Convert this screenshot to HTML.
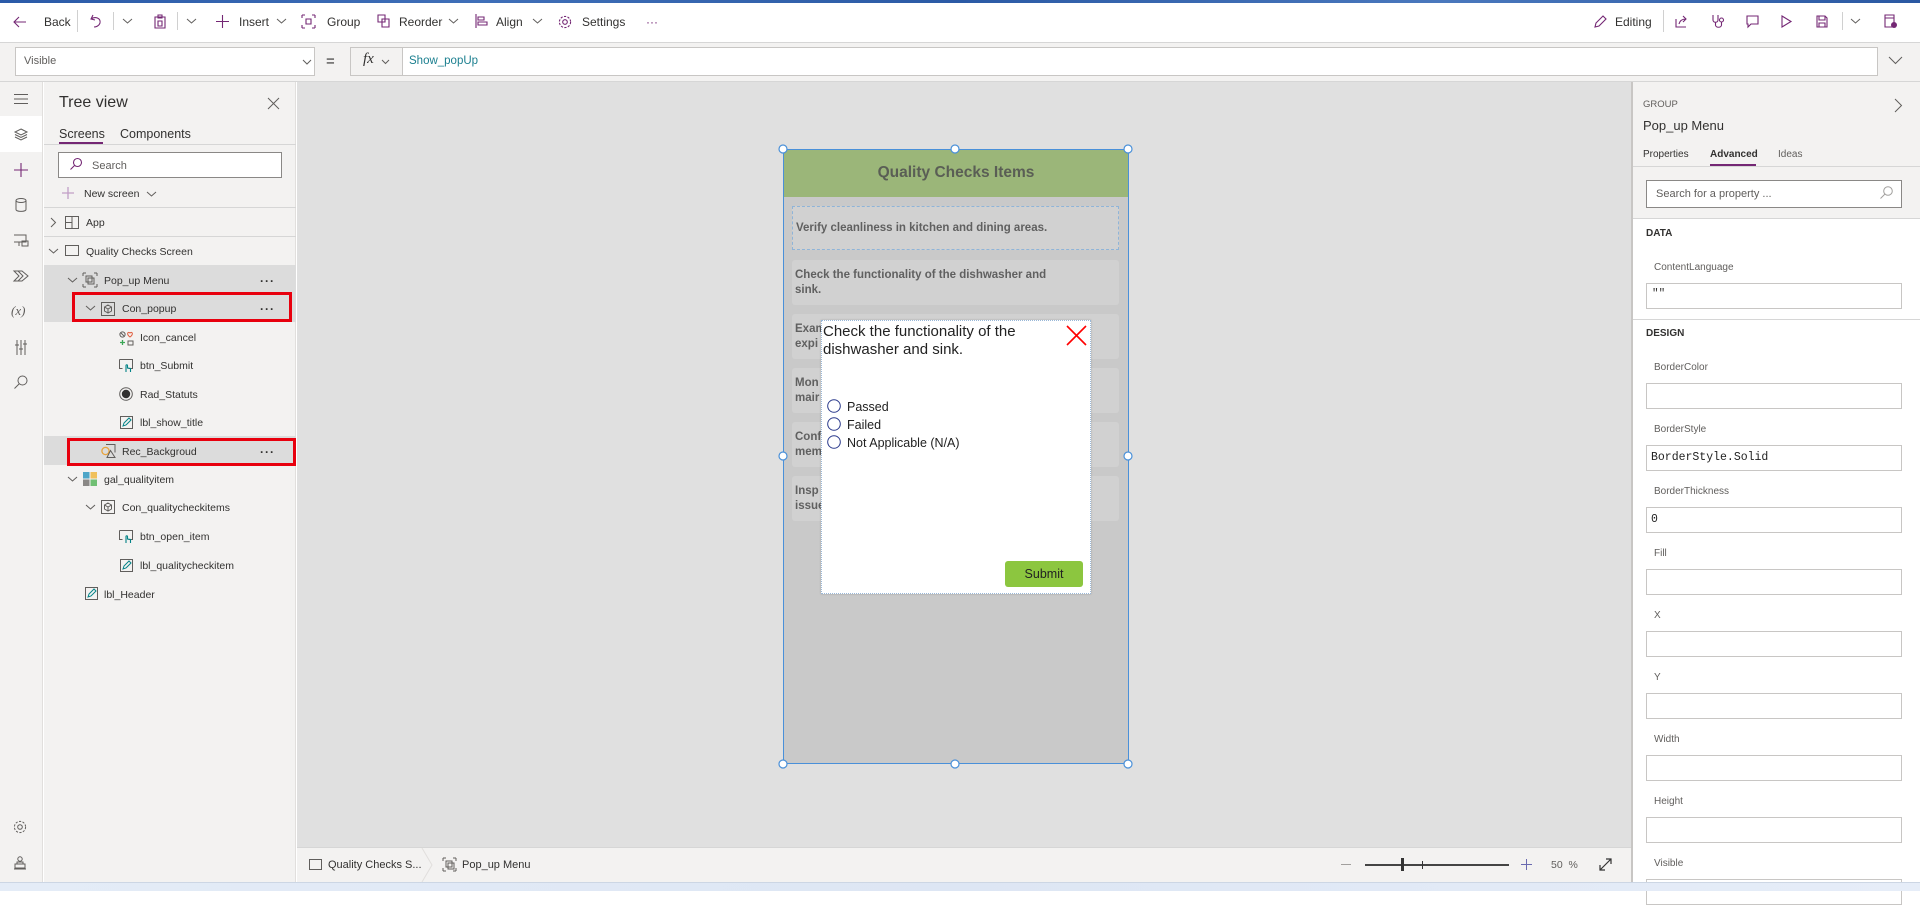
<!DOCTYPE html>
<html><head><meta charset="utf-8">
<style>
*{box-sizing:border-box;margin:0;padding:0}
body{width:1920px;height:891px;overflow:hidden;background:#fff;font-family:"Liberation Sans",sans-serif;color:#323130;position:relative;font-size:12px}
.a{position:absolute}
.t{position:absolute;white-space:nowrap}
svg{position:absolute;overflow:visible}
.pu{stroke:#742774;fill:none;stroke-width:1.1}
.gr{stroke:#605e5c;fill:none;stroke-width:1}
.tr{font-size:10.5px;color:#323130}
.dots{position:absolute;left:260px;color:#323130;letter-spacing:1px;font-size:12px;font-weight:bold}
.lbl{position:absolute;left:1654px;font-size:10px;color:#605e5c}
.inp{position:absolute;left:1646px;width:256px;height:26px;border:1px solid #c8c6c4;background:#fff}
.item{position:absolute;left:792px;width:327px;height:45px;background:#d1d1d1;border-radius:3px;color:#606060;font-size:11.5px;font-weight:bold;padding:8px 3px;line-height:15px}
</style></head><body>
<div class="a" style="left:0;top:0;width:1920px;height:3px;background:linear-gradient(90deg,#2a5aa8,#3f6fb8,#2b5aa5,#4a78bd,#2a58a2)"></div>
<div class="a" style="left:0;top:42px;width:1920px;height:1px;background:#d6d6d6"></div>
<svg style="left:13px;top:16px" width="14" height="12"><path class="pu" d="M13 6H1M6 1L1 6l5 5"/></svg>
<div class="t" style="left:44px;top:15px;font-size:12px">Back</div>
<div class="a" style="left:77px;top:10px;width:1px;height:22px;background:#d0d0d0"></div>
<svg style="left:90px;top:14px" width="12" height="14"><path class="pu" d="M3 1L1 5l4 1M1 5c4-3 10-1 9 4-1 3-4 4-6 4"/></svg>
<div class="a" style="left:113px;top:12px;width:1px;height:18px;background:#d0d0d0"></div>
<svg style="left:123px;top:19px" width="9" height="5"><path class="gr" d="M0 0l4.5 4L9 0"/></svg>
<svg style="left:154px;top:14px" width="12" height="15"><path class="pu" d="M1 3h10v11H1zM4 1h4v3H4zM4 7h4v5H4z"/></svg>
<div class="a" style="left:177px;top:12px;width:1px;height:18px;background:#d0d0d0"></div>
<svg style="left:187px;top:19px" width="9" height="5"><path class="gr" d="M0 0l4.5 4L9 0"/></svg>
<svg style="left:216px;top:15px" width="13" height="13"><path class="pu" d="M6.5 0v13M0 6.5h13"/></svg>
<div class="t" style="left:239px;top:15px">Insert</div>
<svg style="left:277px;top:19px" width="9" height="5"><path class="gr" d="M0 0l4.5 4L9 0"/></svg>
<svg style="left:302px;top:15px" width="13" height="13"><path class="pu" d="M0 0h3M10 0h3M0 13h3M10 13h3M0 0v3M13 0v3M0 10v3M13 10v3M4 4h5v5H4z"/></svg>
<div class="t" style="left:327px;top:15px">Group</div>
<svg style="left:377px;top:14px" width="13" height="14"><path class="pu" d="M1 1h7v7H1zM5 5h7v8H5z"/></svg>
<div class="t" style="left:399px;top:15px">Reorder</div>
<svg style="left:449px;top:19px" width="9" height="5"><path class="gr" d="M0 0l4.5 4L9 0"/></svg>
<svg style="left:475px;top:14px" width="13" height="14"><path class="pu" d="M1 0v14M3 3h6v3H3zM3 8h9v3H3z"/></svg>
<div class="t" style="left:496px;top:15px">Align</div>
<svg style="left:533px;top:19px" width="9" height="5"><path class="gr" d="M0 0l4.5 4L9 0"/></svg>
<svg style="left:558px;top:15px" width="14" height="14"><circle class="pu" cx="7" cy="7" r="2.3"/><circle class="pu" cx="7" cy="7" r="5.6" stroke-dasharray="2.2 1.4"/></svg>
<div class="t" style="left:582px;top:15px">Settings</div>
<div class="t" style="left:646px;top:15px;color:#742774">···</div>
<svg style="left:1594px;top:15px" width="12" height="13"><path class="pu" d="M1 12l1-4 7-7 3 3-7 7z"/></svg>
<div class="t" style="left:1615px;top:15px">Editing</div>
<div class="a" style="left:1663px;top:10px;width:1px;height:22px;background:#d0d0d0"></div>
<svg style="left:1675px;top:15px" width="13" height="13"><path class="pu" d="M1 4v8h10M4 9c1-4 4-5 7-5M8 1l3 3-3 3"/></svg>
<svg style="left:1712px;top:14px" width="13" height="15"><path class="pu" d="M1 1v5c0 3 5 3 5 0V1M3.5 8v3c0 3 6 3 6 0V8"/><circle class="pu" cx="9.5" cy="6" r="2"/></svg>
<svg style="left:1746px;top:15px" width="13" height="13"><path class="pu" d="M1 1h11v8H5l-3 3V9H1z"/></svg>
<svg style="left:1781px;top:15px" width="11" height="13"><path class="pu" d="M1 1l9 5.5L1 12z"/></svg>
<svg style="left:1816px;top:15px" width="12" height="13"><path class="pu" d="M1 1h8l2 2v9H1zM3 1v4h6V1M3 8h6v4H3z"/></svg>
<div class="a" style="left:1842px;top:12px;width:1px;height:18px;background:#d0d0d0"></div>
<svg style="left:1851px;top:19px" width="9" height="5"><path class="gr" d="M0 0l4.5 4L9 0"/></svg>
<svg style="left:1884px;top:14px" width="13" height="15"><path class="pu" d="M1 1h9v12H1zM1 4h9"/><circle cx="10" cy="11" r="3" fill="#742774"/></svg>
<div class="a" style="left:0;top:43px;width:1920px;height:39px;background:#f3f2f1"></div>
<div class="a" style="left:15px;top:47px;width:300px;height:29px;background:#fff;border:1px solid #c8c6c4"></div>
<div class="t" style="left:24px;top:55px;font-size:11px;color:#605e5c">Visible</div>
<svg style="left:303px;top:60px" width="8" height="4"><path class="gr" d="M0 0l4 4 4-4"/></svg>
<div class="t" style="left:326px;top:53px;font-size:15px;color:#323130">=</div>
<div class="a" style="left:350px;top:47px;width:1528px;height:29px;background:#fff;border:1px solid #c8c6c4"></div>
<div class="a" style="left:351px;top:48px;width:52px;height:27px;background:#f3f2f1;border-right:1px solid #c8c6c4"></div>
<div class="t" style="left:363px;top:51px;font-family:'Liberation Serif',serif;font-style:italic;font-size:15px">fx</div>
<svg style="left:382px;top:60px" width="7" height="4"><path class="gr" d="M0 0l3.5 3.5L7 0"/></svg>
<div class="t" style="left:409px;top:55px;font-size:11.5px;color:#1b7f8f">Show_popUp</div>
<svg style="left:1889px;top:57px" width="13" height="7"><path class="gr" d="M0 0l6.5 6.5L13 0"/></svg>
<div class="a" style="left:0;top:81px;width:1920px;height:1px;background:#d6d6d6"></div>
<div class="a" style="left:0;top:82px;width:43px;height:800px;background:#f3f2f1;border-right:1px solid #e1dfdd"></div>
<div class="a" style="left:0;top:116px;width:42px;height:36px;background:#fff"></div>
<svg style="left:14px;top:94px" width="14" height="10"><path class="gr" d="M0 .5h14M0 5h14M0 9.5h14"/></svg>
<svg style="left:14px;top:128px" width="14" height="12"><path class="gr" d="M7 1l6 3-6 3-6-3zM1 6.5l6 3 6-3M1 9l6 3 6-3"/></svg>
<svg style="left:14px;top:163px" width="14" height="14"><path class="pu" d="M7 0v14M0 7h14"/></svg>
<svg style="left:15px;top:198px" width="12" height="14"><ellipse class="gr" cx="6" cy="2.5" rx="5" ry="2"/><path class="gr" d="M1 2.5v9c0 2.5 10 2.5 10 0v-9"/></svg>
<svg style="left:13px;top:234px" width="16" height="13"><path class="gr" d="M1 1h12v7H1M6 8v4M9 7h6v5H9z"/></svg>
<svg style="left:13px;top:270px" width="16" height="12"><path class="gr" d="M1 1h8l6 5-6 5H1l5-5zM5 1l5 5-5 5"/></svg>
<div class="t" style="left:11px;top:303px;font-family:'Liberation Serif',serif;font-size:13px;font-style:italic;color:#605e5c">(x)</div>
<svg style="left:15px;top:340px" width="12" height="15"><path class="gr" d="M2 0v15M6 0v15M10 0v15M0 5h4M4 9h4M8 4h4"/></svg>
<svg style="left:14px;top:375px" width="14" height="14"><circle class="gr" cx="8.5" cy="5.5" r="4.5"/><path class="gr" d="M5.5 8.5L.5 13.5"/></svg>
<svg style="left:13px;top:820px" width="14" height="14"><circle class="gr" cx="7" cy="7" r="2.3"/><circle class="gr" cx="7" cy="7" r="5.6" stroke-dasharray="2.2 1.4"/></svg>
<svg style="left:13px;top:856px" width="14" height="14"><circle class="gr" cx="7" cy="3" r="2.2"/><path class="gr" d="M2 8h10v4H2zM1 13h12M4 8v-2h6v2"/></svg>
<div class="a" style="left:44px;top:82px;width:252px;height:800px;background:#f3f2f1;border-right:1px solid #e1dfdd"></div>
<div class="t" style="left:59px;top:94px;font-size:16px;color:#323130">Tree view</div>
<svg style="left:268px;top:98px" width="11" height="11"><path class="gr" d="M0 0l11 11M11 0L0 11"/></svg>
<div class="t" style="left:59px;top:127px;font-size:12.5px">Screens</div>
<div class="a" style="left:59px;top:142px;width:44px;height:2px;background:#742774"></div>
<div class="t" style="left:120px;top:127px;font-size:12.5px">Components</div>
<div class="a" style="left:44px;top:144px;width:252px;height:1px;background:#d6d6d6"></div>
<div class="a" style="left:58px;top:152px;width:224px;height:26px;background:#fff;border:1px solid #8a8886"></div>
<svg style="left:70px;top:158px" width="12" height="12"><circle class="pu" cx="7.5" cy="4.5" r="4"/><path class="pu" d="M4.5 7.5L.5 11.5"/></svg>
<div class="t" style="left:92px;top:160px;font-size:11px;color:#605e5c">Search</div>
<svg style="left:62px;top:187px" width="12" height="12"><path d="M6 0v12M0 6h12" stroke="#c19ec7" stroke-width="1.3"/></svg>
<div class="t tr" style="left:84px;top:188px">New screen</div>
<svg style="left:147px;top:192px" width="9" height="5"><path class="gr" d="M0 0l4.5 4L9 0"/></svg>
<div class="a" style="left:44px;top:207px;width:252px;height:1px;background:#d6d6d6"></div>
<svg style="left:51px;top:218px" width="5" height="9"><path class="gr" d="M0 0l4.5 4.5L0 9"/></svg>
<svg style="left:65px;top:216px" width="14" height="13"><path class="gr" d="M.5.5h13v12H.5zM7 .5v12M.5 6.5h6.5"/></svg>
<div class="t tr" style="left:86px;top:217px">App</div>
<div class="a" style="left:44px;top:236px;width:252px;height:1px;background:#d6d6d6"></div>
<svg style="left:49px;top:249px" width="9" height="5"><path class="gr" d="M0 0l4.5 4L9 0"/></svg>
<svg style="left:65px;top:245px" width="14" height="11"><path class="gr" d="M.5.5h13v10H.5z"/></svg>
<div class="t tr" style="left:86px;top:246px">Quality Checks Screen</div>
<div class="a" style="left:44px;top:265px;width:252px;height:57px;background:#dcdcdc"></div>
<div class="a" style="left:44px;top:436px;width:252px;height:29px;background:#dcdcdc"></div>
<svg style="left:68px;top:278px" width="9" height="5"><path class="gr" d="M0 0l4.5 4L9 0"/></svg>
<svg style="left:83px;top:273px" width="14" height="14"><path class="gr" d="M0 0h3M11 0h3M0 14h3M11 14h3M0 0v3M14 0v3M0 11v3M14 11v3M3 3h6v6H3zM5 5h6v6H5z"/></svg>
<div class="t tr" style="left:104px;top:275px">Pop_up Menu</div>
<div class="dots" style="top:274px">···</div>
<div class="a" style="left:72px;top:292px;width:220px;height:30px;border:3px solid #e8000e"></div>
<svg style="left:86px;top:306px" width="9" height="5"><path class="gr" d="M0 0l4.5 4L9 0"/></svg>
<svg style="left:101px;top:302px" width="14" height="14"><path class="gr" d="M.5.5h13v13H.5zM7 3l3.5 2v4L7 11 3.5 9V5zM3.5 5L7 7l3.5-2M7 7v4"/></svg>
<div class="t tr" style="left:122px;top:303px">Con_popup</div>
<div class="dots" style="top:302px">···</div>
<svg style="left:119px;top:331px" width="15" height="15"><circle cx="3.5" cy="3.5" r="2.6" fill="none" stroke="#605e5c"/><path d="M2 2l3 3" stroke="#605e5c"/><path d="M11 2c-2-2-4 1 0 4 4-3 2-6 0-4z" fill="none" stroke="#e05a3a"/><path d="M3.5 9v5M1 11.5h5" stroke="#3aa655" stroke-width="1.3"/><path d="M9 10h5v4H9z" fill="none" stroke="#605e5c"/></svg>
<div class="t tr" style="left:140px;top:332px">Icon_cancel</div>
<svg style="left:119px;top:359px" width="15" height="14"><path class="gr" d="M.5.5h13v9h-4M.5.5v9h3"/><path d="M7 13V6.5c0-1 1.5-1 1.5 0V9l3 .5V13" fill="none" stroke="#038387" stroke-width="1.1"/></svg>
<div class="t tr" style="left:140px;top:360px">btn_Submit</div>
<svg style="left:119px;top:387px" width="14" height="14"><circle cx="7" cy="7" r="6.3" fill="none" stroke="#605e5c"/><circle cx="7" cy="7" r="4.2" fill="#323130"/></svg>
<div class="t tr" style="left:140px;top:389px">Rad_Statuts</div>
<svg style="left:120px;top:416px" width="13" height="13"><path class="gr" d="M.5.5h12v12H.5z"/><path d="M3 10l1-3 5-5 2 2-5 5z" fill="none" stroke="#038387"/></svg>
<div class="t tr" style="left:140px;top:417px">lbl_show_title</div>
<div class="a" style="left:67px;top:438px;width:229px;height:28px;border:3px solid #e8000e"></div>
<svg style="left:101px;top:444px" width="15" height="14"><circle cx="4.5" cy="7" r="3.6" fill="none" stroke="#e8a33c" stroke-width="1.3"/><path class="gr" d="M5 .5h9v8M6 13.5l3.5-7 4.5 7z"/></svg>
<div class="t tr" style="left:122px;top:446px">Rec_Backgroud</div>
<div class="dots" style="top:445px">···</div>
<svg style="left:68px;top:477px" width="9" height="5"><path class="gr" d="M0 0l4.5 4L9 0"/></svg>
<svg style="left:83px;top:472px" width="14" height="14"><rect x="0" y="0" width="6.5" height="6.5" fill="#4ea6c8"/><rect x="7.5" y="0" width="6.5" height="6.5" fill="#f0c05a"/><rect x="0" y="7.5" width="6.5" height="6.5" fill="#8a8886"/><rect x="7.5" y="7.5" width="6.5" height="6.5" fill="#6fbf73"/></svg>
<div class="t tr" style="left:104px;top:474px">gal_qualityitem</div>
<svg style="left:86px;top:505px" width="9" height="5"><path class="gr" d="M0 0l4.5 4L9 0"/></svg>
<svg style="left:101px;top:500px" width="14" height="14"><path class="gr" d="M.5.5h13v13H.5zM7 3l3.5 2v4L7 11 3.5 9V5zM3.5 5L7 7l3.5-2M7 7v4"/></svg>
<div class="t tr" style="left:122px;top:502px">Con_qualitycheckitems</div>
<svg style="left:119px;top:530px" width="15" height="14"><path class="gr" d="M.5.5h13v9h-4M.5.5v9h3"/><path d="M7 13V6.5c0-1 1.5-1 1.5 0V9l3 .5V13" fill="none" stroke="#038387" stroke-width="1.1"/></svg>
<div class="t tr" style="left:140px;top:531px">btn_open_item</div>
<svg style="left:120px;top:559px" width="13" height="13"><path class="gr" d="M.5.5h12v12H.5z"/><path d="M3 10l1-3 5-5 2 2-5 5z" fill="none" stroke="#038387"/></svg>
<div class="t tr" style="left:140px;top:560px">lbl_qualitycheckitem</div>
<svg style="left:85px;top:587px" width="13" height="13"><path class="gr" d="M.5.5h12v12H.5z"/><path d="M3 10l1-3 5-5 2 2-5 5z" fill="none" stroke="#038387"/></svg>
<div class="t tr" style="left:104px;top:589px">lbl_Header</div>
<div class="a" style="left:297px;top:82px;width:1334px;height:765px;background:#e0e0e0"></div>
<div class="a" style="left:783px;top:149px;width:346px;height:615px;background:#c9c9c9;border:1px solid #4a90d9"></div>
<div class="a" style="left:784px;top:150px;width:344px;height:47px;background:#9bb679"></div>
<div class="t" style="left:784px;top:164px;width:344px;text-align:center;font-size:15.5px;font-weight:bold;color:#5a5e55">Quality Checks Items</div>
<div class="item" style="top:206px;height:44px;border:1px dashed #8fb4d8;border-radius:0;padding-top:14px">Verify cleanliness in kitchen and dining areas.</div>
<div class="item" style="top:260px">Check the functionality of the dishwasher and<br>sink.</div>
<div class="item" style="top:314px">Exam<br>expi</div>
<div class="item" style="top:368px">Mon<br>mair</div>
<div class="item" style="top:422px">Conf<br>mem</div>
<div class="item" style="top:476px">Insp<br>issue</div>
<div class="a" style="left:821px;top:320px;width:270px;height:274px;background:#fff;border:1px dotted #9ab8d8;box-shadow:0 0 2px rgba(0,0,0,.2)"></div>
<div class="t" style="left:823px;top:323px;font-size:15px;line-height:18px;color:#222">Check the functionality of the<br>dishwasher and sink.</div>
<svg style="left:1066px;top:325px" width="21" height="21"><path d="M1 1l19 19M20 1L1 20" stroke="#f00" stroke-width="1.6"/></svg>
<svg style="left:827px;top:399px" width="15" height="51"><circle cx="7" cy="7" r="6.3" fill="none" stroke="#2b3a8c"/><circle cx="7" cy="25" r="6.3" fill="none" stroke="#2b3a8c"/><circle cx="7" cy="43" r="6.3" fill="none" stroke="#2b3a8c"/></svg>
<div class="t" style="left:847px;top:398px;font-size:12.5px;line-height:18px;color:#222">Passed<br>Failed<br>Not Applicable (N/A)</div>
<div class="a" style="left:1005px;top:561px;width:78px;height:26px;background:#8cc63f;border-radius:3px;text-align:center;line-height:26px;font-size:12.5px;color:#222">Submit</div>
<svg style="left:0;top:0" width="1" height="1">
<g fill="#fff" stroke="#4a90d9" stroke-width="1.2">
<circle cx="783" cy="149" r="4"/><circle cx="955" cy="149" r="4"/><circle cx="1128" cy="149" r="4"/>
<circle cx="783" cy="456" r="4"/><circle cx="1128" cy="456" r="4"/>
<circle cx="783" cy="764" r="4"/><circle cx="955" cy="764" r="4"/><circle cx="1128" cy="764" r="4"/></g></svg>
<div class="a" style="left:297px;top:847px;width:1334px;height:35px;background:#f3f2f1;border-top:1px solid #d6d6d6"></div>
<svg style="left:309px;top:859px" width="13" height="11"><path class="gr" d="M.5.5h12v10H.5z"/></svg>
<div class="t" style="left:328px;top:859px;font-size:11px">Quality Checks S...</div>
<svg style="left:421px;top:848px" width="12" height="34"><path d="M1 0l10 17L1 34" fill="none" stroke="#e1dfdd"/></svg>
<svg style="left:443px;top:858px" width="13" height="13"><path class="gr" d="M0 0h3M10 0h3M0 13h3M10 13h3M0 0v3M13 0v3M0 10v3M13 10v3M3 3h6v6H3zM5 5h6v6H5z"/></svg>
<div class="t" style="left:462px;top:859px;font-size:11px">Pop_up Menu</div>
<div class="a" style="left:1341px;top:864px;width:10px;height:1px;background:#a19f9d"></div>
<div class="a" style="left:1365px;top:864px;width:144px;height:2px;background:#444"></div>
<div class="a" style="left:1401px;top:858px;width:3px;height:13px;background:#333"></div>
<div class="a" style="left:1422px;top:861px;width:1px;height:8px;background:#333"></div>
<svg style="left:1521px;top:859px" width="11" height="11"><path d="M5.5 0v11M0 5.5h11" stroke="#6a6ab0" stroke-width="1"/></svg>
<div class="t" style="left:1551px;top:859px;font-size:10.5px;color:#605e5c">50 &nbsp;%</div>
<svg style="left:1599px;top:858px" width="13" height="13"><path d="M1 12L12 1M7 1h5v5M1 7v5h5" fill="none" stroke="#333" stroke-width="1.2"/></svg>
<div class="a" style="left:1631px;top:82px;width:289px;height:137px;background:#f3f2f1;border-left:2px solid #c8c6c4"></div>
<div class="a" style="left:1631px;top:219px;width:289px;height:663px;background:#fff;border-left:2px solid #c8c6c4"></div>
<div class="t" style="left:1643px;top:99px;font-size:9.5px;color:#605e5c">GROUP</div>
<svg style="left:1895px;top:99px" width="7" height="13"><path class="gr" d="M0 0l6.5 6.5L0 13"/></svg>
<div class="t" style="left:1643px;top:118px;font-size:13px;color:#323130">Pop_up Menu</div>
<div class="t" style="left:1643px;top:149px;font-size:10px">Properties</div>
<div class="t" style="left:1710px;top:149px;font-size:10px;font-weight:bold">Advanced</div>
<div class="a" style="left:1710px;top:164px;width:46px;height:2px;background:#742774"></div>
<div class="t" style="left:1778px;top:149px;font-size:10px;color:#605e5c">Ideas</div>
<div class="a" style="left:1633px;top:166px;width:287px;height:1px;background:#d6d6d6"></div>
<div class="a" style="left:1646px;top:180px;width:256px;height:28px;background:#fff;border:1px solid #8a8886"></div>
<div class="t" style="left:1656px;top:188px;font-size:11px;color:#605e5c">Search for a property ...</div>
<svg style="left:1880px;top:186px" width="13" height="13"><circle cx="8" cy="5" r="4.3" fill="none" stroke="#a19f9d"/><path d="M5 8L.5 12.5" stroke="#a19f9d"/></svg>
<div class="a" style="left:1633px;top:218px;width:287px;height:1px;background:#d6d6d6"></div>
<div class="t" style="left:1646px;top:228px;font-size:10px;font-weight:bold;color:#323130">DATA</div>
<div class="lbl" style="top:262px">ContentLanguage</div>
<div class="inp" style="top:283px"></div>
<div class="t" style="left:1652px;top:288px;font-family:'Liberation Mono',monospace;font-size:11px">""</div>
<div class="a" style="left:1633px;top:319px;width:287px;height:1px;background:#d6d6d6"></div>
<div class="t" style="left:1646px;top:328px;font-size:10px;font-weight:bold;color:#323130">DESIGN</div>
<div class="lbl" style="top:362px">BorderColor</div>
<div class="inp" style="top:383px"></div>
<div class="lbl" style="top:424px">BorderStyle</div>
<div class="inp" style="top:445px"></div>
<div class="t" style="left:1651px;top:451px;font-family:'Liberation Mono',monospace;font-size:11.5px;color:#222">BorderStyle.Solid</div>
<div class="lbl" style="top:486px">BorderThickness</div>
<div class="inp" style="top:507px"></div>
<div class="t" style="left:1651px;top:513px;font-family:'Liberation Mono',monospace;font-size:11.5px;color:#222">0</div>
<div class="lbl" style="top:548px">Fill</div>
<div class="inp" style="top:569px"></div>
<div class="lbl" style="top:610px">X</div>
<div class="inp" style="top:631px"></div>
<div class="lbl" style="top:672px">Y</div>
<div class="inp" style="top:693px"></div>
<div class="lbl" style="top:734px">Width</div>
<div class="inp" style="top:755px"></div>
<div class="lbl" style="top:796px">Height</div>
<div class="inp" style="top:817px"></div>
<div class="lbl" style="top:858px">Visible</div>
<div class="inp" style="top:879px"></div>
<div class="a" style="left:0;top:882px;width:1920px;height:9px;background:linear-gradient(90deg,#e4ecf7,#dde6f4,#e6edf8)"></div>
<div class="a" style="left:0;top:882px;width:1920px;height:1px;background:#ccd6e4"></div>
</body></html>
